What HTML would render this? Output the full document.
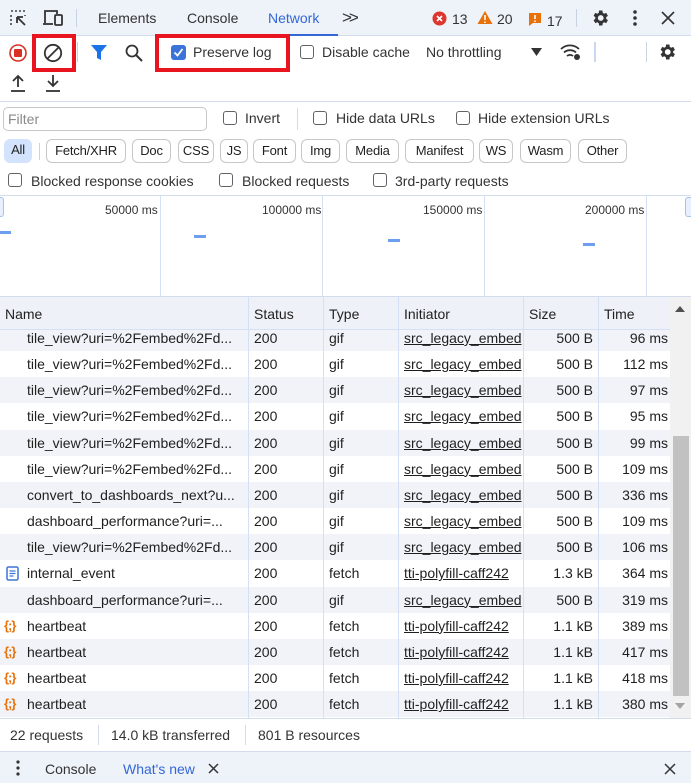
<!DOCTYPE html>
<html><head><meta charset="utf-8"><style>
*{box-sizing:border-box;margin:0;padding:0}
body{width:691px;height:783px;overflow:hidden;background:#fff;font-family:"Liberation Sans",sans-serif;font-size:14px;color:#1f1f1f;position:relative}
.a{position:absolute;white-space:nowrap}
.cb{position:absolute;width:14px;height:14px;border:1.5px solid #5f6368;border-radius:3px;background:#fff}
.chip{position:absolute;top:139px;height:24px;border:1px solid #c7c7c7;border-radius:6px;font-size:13px;line-height:22px;text-align:center;color:#1f1f1f;letter-spacing:-0.2px}
.row{position:absolute;left:0;width:670px;height:26.15px;font-size:14px;line-height:26px}
.row span{position:absolute;white-space:nowrap}
.g{background:#f1f3f8}
.vl{position:absolute;width:1px;background:#d3e0f5}
u{text-decoration:underline}
</style></head><body>
<div class="a" style="left:0;top:0;width:691px;height:36px;background:#eef2f9;border-bottom:1px solid #d3dcec"></div>
<svg class="a" style="left:9px;top:9px" width="20" height="20" viewBox="0 0 20 20"><path d="M2 2h2M6 2h2M10 2h2M14 2h2M2 6v2M2 10v2M2 14v2M16 6v1" stroke="#444" stroke-width="1.6"/><path d="M8 8l8 8M8 8h6M8 8v6" stroke="#333" stroke-width="1.8" fill="none"/></svg>
<svg class="a" style="left:42px;top:9px" width="22" height="18" viewBox="0 0 22 18"><path d="M3 14V2h12v3" stroke="#333" stroke-width="1.8" fill="none"/><path d="M1 15h10" stroke="#333" stroke-width="1.8"/><rect x="13" y="6" width="7" height="10" rx="1" stroke="#333" stroke-width="1.8" fill="none"/></svg>
<div class="a" style="left:76px;top:9px;width:1px;height:18px;background:#c8d2e2"></div>
<div class="a" style="left:98px;top:10px;color:#333">Elements</div>
<div class="a" style="left:187px;top:10px;color:#333">Console</div>
<div class="a" style="left:268px;top:10px;color:#3367d6">Network</div>
<div class="a" style="left:260px;top:34px;width:78px;height:2px;background:#3367d6"></div>
<div class="a" style="left:342px;top:8px;font-size:17px;color:#333;letter-spacing:-3px">&gt;&gt;</div>
<svg class="a" style="left:432px;top:11px" width="15" height="15"><circle cx="7.5" cy="7.5" r="7" fill="#dc362e"/><path d="M5 5l5 5M10 5l-5 5" stroke="#fff" stroke-width="1.6"/></svg>
<div class="a" style="left:452px;top:11px;color:#333">13</div>
<svg class="a" style="left:477px;top:10px" width="16" height="15"><path d="M8 1L15.5 14H.5z" fill="#e8710a"/><path d="M8 5v5M8 11.5v1.5" stroke="#fff" stroke-width="1.6"/></svg>
<div class="a" style="left:497px;top:11px;color:#333">20</div>
<svg class="a" style="left:528px;top:12px" width="14" height="15"><path d="M1 1h12v10H5l-4 3z" fill="#e8710a"/><path d="M7 3v4M7 8.5v1.5" stroke="#fff" stroke-width="1.6"/></svg>
<div class="a" style="left:547px;top:13px;color:#333">17</div>
<div class="a" style="left:576px;top:9px;width:1px;height:18px;background:#c8d2e2"></div>
<svg class="a" style="left:590px;top:8px" width="20" height="20" viewBox="0 0 24 24"><path fill="#333" d="M19.4 13a7.5 7.5 0 000-2l2.1-1.6-2-3.5-2.5 1a7 7 0 00-1.7-1L14.9 3h-4l-.4 2.9a7 7 0 00-1.7 1l-2.5-1-2 3.5L6.4 11a7.5 7.5 0 000 2l-2.1 1.6 2 3.5 2.5-1a7 7 0 001.7 1l.4 2.9h4l.4-2.9a7 7 0 001.7-1l2.5 1 2-3.5zM12.9 15.5a3.5 3.5 0 110-7 3.5 3.5 0 010 7z"/></svg>
<svg class="a" style="left:632px;top:9px" width="6" height="18"><circle cx="3" cy="3" r="1.8" fill="#333"/><circle cx="3" cy="9" r="1.8" fill="#333"/><circle cx="3" cy="15" r="1.8" fill="#333"/></svg>
<svg class="a" style="left:661px;top:11px" width="14" height="14"><path d="M1 1l12 12M13 1L1 13" stroke="#333" stroke-width="1.6"/></svg>

<svg class="a" style="left:9px;top:44px" width="18" height="18"><circle cx="9" cy="9" r="8" stroke="#d93025" stroke-width="1.6" fill="none"/><rect x="5" y="5" width="8" height="8" rx="1" fill="#d93025"/></svg>
<div class="a" style="left:32px;top:34px;width:44px;height:38px;border:4px solid #e8141f"></div>
<svg class="a" style="left:43px;top:43px" width="20" height="20"><circle cx="10" cy="10" r="8.2" stroke="#333" stroke-width="1.8" fill="none"/><path d="M4.5 15.5l11-11" stroke="#333" stroke-width="1.8"/></svg>
<div class="a" style="left:77px;top:42px;width:1px;height:20px;background:#c8d2e2"></div>
<svg class="a" style="left:91px;top:45px" width="16" height="16"><path d="M0 0h16l-6 7v8l-4-2V7z" fill="#1a73e8"/></svg>
<svg class="a" style="left:124px;top:43px" width="20" height="20"><circle cx="8" cy="8" r="5.5" stroke="#333" stroke-width="1.8" fill="none"/><path d="M12 12l6 6" stroke="#333" stroke-width="2"/></svg>
<div class="a" style="left:155px;top:34px;width:135px;height:38px;border:4px solid #e8141f"></div>
<div class="a" style="left:171px;top:45px;width:15px;height:15px;border-radius:3px;background:#3b73d9"></div>
<svg class="a" style="left:173px;top:47px" width="11" height="11"><path d="M1.5 5.5l3 3 5-6.5" stroke="#fff" stroke-width="1.8" fill="none"/></svg>
<div class="a" style="left:193px;top:44px;color:#333">Preserve log</div>
<div class="cb" style="left:300px;top:45px"></div>
<div class="a" style="left:322px;top:44px;color:#333">Disable cache</div>
<div class="a" style="left:426px;top:44px;color:#333">No throttling</div>
<svg class="a" style="left:531px;top:48px" width="11" height="8"><path d="M0 0h11L5.5 8z" fill="#333"/></svg>
<svg class="a" style="left:560px;top:43px" width="22" height="18"><path d="M1 6a13 13 0 0118 0M4 9.5a9 9 0 0112 0M7 13a4.5 4.5 0 016 0" stroke="#333" stroke-width="1.8" fill="none"/><circle cx="17" cy="14" r="3" fill="#333"/></svg>
<div class="a" style="left:594px;top:42px;width:2px;height:20px;background:#c8d8f0"></div>
<div class="a" style="left:646px;top:42px;width:1px;height:20px;background:#c8d2e2"></div>
<svg class="a" style="left:657px;top:42px" width="20" height="20" viewBox="0 0 24 24"><path fill="#333" d="M19.4 13a7.5 7.5 0 000-2l2.1-1.6-2-3.5-2.5 1a7 7 0 00-1.7-1L14.9 3h-4l-.4 2.9a7 7 0 00-1.7 1l-2.5-1-2 3.5L6.4 11a7.5 7.5 0 000 2l-2.1 1.6 2 3.5 2.5-1a7 7 0 001.7 1l.4 2.9h4l.4-2.9a7 7 0 001.7-1l2.5 1 2-3.5zM12.9 15.5a3.5 3.5 0 110-7 3.5 3.5 0 010 7z"/></svg>
<svg class="a" style="left:10px;top:74px" width="16" height="18"><path d="M8 13V2M3 7l5-5 5 5" stroke="#333" stroke-width="1.8" fill="none"/><path d="M1 17h14" stroke="#333" stroke-width="1.8"/></svg>
<svg class="a" style="left:45px;top:74px" width="16" height="18"><path d="M8 1v11M3 7l5 5 5-5" stroke="#333" stroke-width="1.8" fill="none"/><path d="M1 17h14" stroke="#333" stroke-width="1.8"/></svg>
<div class="a" style="left:0;top:101px;width:691px;height:1px;background:#d3dcec"></div>

<div class="a" style="left:3px;top:107px;width:204px;height:24px;border:1px solid #c7c7c7;border-radius:5px"></div>
<div class="a" style="left:8px;top:111px;color:#8a8a8a">Filter</div>
<div class="cb" style="left:223px;top:111px"></div>
<div class="a" style="left:245px;top:110px;color:#333">Invert</div>
<div class="a" style="left:297px;top:108px;width:1px;height:22px;background:#d3dcec"></div>
<div class="cb" style="left:313px;top:111px"></div>
<div class="a" style="left:336px;top:110px;color:#333">Hide data URLs</div>
<div class="cb" style="left:456px;top:111px"></div>
<div class="a" style="left:478px;top:110px;color:#333">Hide extension URLs</div>
<div class="chip" style="left:4px;width:28px;border:none;background:#d3e3fd">All</div>
<div class="a" style="left:39px;top:143px;width:1px;height:17px;background:#c8d2e2"></div>
<div class="chip" style="left:46px;width:80px">Fetch/XHR</div>
<div class="chip" style="left:132px;width:39px">Doc</div>
<div class="chip" style="left:178px;width:36px">CSS</div>
<div class="chip" style="left:220px;width:28px">JS</div>
<div class="chip" style="left:253px;width:43px">Font</div>
<div class="chip" style="left:301px;width:39px">Img</div>
<div class="chip" style="left:346px;width:53px">Media</div>
<div class="chip" style="left:405px;width:69px">Manifest</div>
<div class="chip" style="left:479px;width:34px">WS</div>
<div class="chip" style="left:520px;width:51px">Wasm</div>
<div class="chip" style="left:578px;width:49px">Other</div>
<div class="cb" style="left:8px;top:173px"></div>
<div class="a" style="left:31px;top:173px;color:#333">Blocked response cookies</div>
<div class="cb" style="left:219px;top:173px"></div>
<div class="a" style="left:242px;top:173px;color:#333">Blocked requests</div>
<div class="cb" style="left:373px;top:173px"></div>
<div class="a" style="left:395px;top:173px;color:#333">3rd-party requests</div>
<div class="a" style="left:0;top:195px;width:691px;height:1px;background:#d3dcec"></div>

<div class="a" style="left:-4px;top:197px;width:8px;height:20px;border:1px solid #a8c1ec;border-radius:3px;background:#e8f0fd"></div>
<div class="a" style="left:685px;top:197px;width:10px;height:20px;border:1px solid #a8c1ec;border-radius:3px;background:#e8f0fd"></div>
<div class="vl" style="left:160px;top:196px;height:100px"></div>
<div class="vl" style="left:322px;top:196px;height:100px"></div>
<div class="vl" style="left:484px;top:196px;height:100px"></div>
<div class="vl" style="left:646px;top:196px;height:100px"></div>
<div class="a" style="left:105px;top:203px;font-size:12px;color:#333">50000 ms</div>
<div class="a" style="left:262px;top:203px;font-size:12px;color:#333">100000 ms</div>
<div class="a" style="left:423px;top:203px;font-size:12px;color:#333">150000 ms</div>
<div class="a" style="left:585px;top:203px;font-size:12px;color:#333">200000 ms</div>
<div class="a" style="left:0;top:231px;width:11px;height:3px;background:#6e9ef0"></div>
<div class="a" style="left:194px;top:235px;width:12px;height:3px;background:#6e9ef0"></div>
<div class="a" style="left:388px;top:239px;width:12px;height:3px;background:#6e9ef0"></div>
<div class="a" style="left:583px;top:243px;width:12px;height:3px;background:#6e9ef0"></div>
<div class="a" style="left:0;top:296px;width:691px;height:1px;background:#d3dcec"></div>

<div class="row g" style="top:325px"><span style="left:27px">tile_view?uri=%2Fembed%2Fd...</span><span style="left:254px">200</span><span style="left:329px">gif</span><span style="left:404px"><u>src_legacy_embed</u></span><span style="right:77px">500 B</span><span style="right:2px">96 ms</span></div>
<div class="row" style="top:351.15px"><span style="left:27px">tile_view?uri=%2Fembed%2Fd...</span><span style="left:254px">200</span><span style="left:329px">gif</span><span style="left:404px"><u>src_legacy_embed</u></span><span style="right:77px">500 B</span><span style="right:2px">112 ms</span></div>
<div class="row g" style="top:377.3px"><span style="left:27px">tile_view?uri=%2Fembed%2Fd...</span><span style="left:254px">200</span><span style="left:329px">gif</span><span style="left:404px"><u>src_legacy_embed</u></span><span style="right:77px">500 B</span><span style="right:2px">97 ms</span></div>
<div class="row" style="top:403.45px"><span style="left:27px">tile_view?uri=%2Fembed%2Fd...</span><span style="left:254px">200</span><span style="left:329px">gif</span><span style="left:404px"><u>src_legacy_embed</u></span><span style="right:77px">500 B</span><span style="right:2px">95 ms</span></div>
<div class="row g" style="top:429.6px"><span style="left:27px">tile_view?uri=%2Fembed%2Fd...</span><span style="left:254px">200</span><span style="left:329px">gif</span><span style="left:404px"><u>src_legacy_embed</u></span><span style="right:77px">500 B</span><span style="right:2px">99 ms</span></div>
<div class="row" style="top:455.75px"><span style="left:27px">tile_view?uri=%2Fembed%2Fd...</span><span style="left:254px">200</span><span style="left:329px">gif</span><span style="left:404px"><u>src_legacy_embed</u></span><span style="right:77px">500 B</span><span style="right:2px">109 ms</span></div>
<div class="row g" style="top:481.9px"><span style="left:27px">convert_to_dashboards_next?u...</span><span style="left:254px">200</span><span style="left:329px">gif</span><span style="left:404px"><u>src_legacy_embed</u></span><span style="right:77px">500 B</span><span style="right:2px">336 ms</span></div>
<div class="row" style="top:508.05px"><span style="left:27px">dashboard_performance?uri=...</span><span style="left:254px">200</span><span style="left:329px">gif</span><span style="left:404px"><u>src_legacy_embed</u></span><span style="right:77px">500 B</span><span style="right:2px">109 ms</span></div>
<div class="row g" style="top:534.2px"><span style="left:27px">tile_view?uri=%2Fembed%2Fd...</span><span style="left:254px">200</span><span style="left:329px">gif</span><span style="left:404px"><u>src_legacy_embed</u></span><span style="right:77px">500 B</span><span style="right:2px">106 ms</span></div>
<div class="row" style="top:560.35px"><svg style="position:absolute;left:6px;top:6px" width="13" height="15"><rect x="1" y="1" width="11" height="13" rx="1.5" stroke="#3b73d9" stroke-width="1.5" fill="none"/><path d="M3.5 5h6M3.5 7.5h6M3.5 10h4" stroke="#3b73d9" stroke-width="1.3"/></svg><span style="left:27px">internal_event</span><span style="left:254px">200</span><span style="left:329px">fetch</span><span style="left:404px"><u>tti-polyfill-caff242</u></span><span style="right:77px">1.3 kB</span><span style="right:2px">364 ms</span></div>
<div class="row g" style="top:586.5px"><span style="left:27px">dashboard_performance?uri=...</span><span style="left:254px">200</span><span style="left:329px">gif</span><span style="left:404px"><u>src_legacy_embed</u></span><span style="right:77px">500 B</span><span style="right:2px">319 ms</span></div>
<div class="row" style="top:612.65px"><span style="left:4px;color:#e8710a;font-size:13px;font-weight:bold;letter-spacing:-1px">{;}</span><span style="left:27px">heartbeat</span><span style="left:254px">200</span><span style="left:329px">fetch</span><span style="left:404px"><u>tti-polyfill-caff242</u></span><span style="right:77px">1.1 kB</span><span style="right:2px">389 ms</span></div>
<div class="row g" style="top:638.8px"><span style="left:4px;color:#e8710a;font-size:13px;font-weight:bold;letter-spacing:-1px">{;}</span><span style="left:27px">heartbeat</span><span style="left:254px">200</span><span style="left:329px">fetch</span><span style="left:404px"><u>tti-polyfill-caff242</u></span><span style="right:77px">1.1 kB</span><span style="right:2px">417 ms</span></div>
<div class="row" style="top:664.95px"><span style="left:4px;color:#e8710a;font-size:13px;font-weight:bold;letter-spacing:-1px">{;}</span><span style="left:27px">heartbeat</span><span style="left:254px">200</span><span style="left:329px">fetch</span><span style="left:404px"><u>tti-polyfill-caff242</u></span><span style="right:77px">1.1 kB</span><span style="right:2px">418 ms</span></div>
<div class="row g" style="top:691.1px"><span style="left:4px;color:#e8710a;font-size:13px;font-weight:bold;letter-spacing:-1px">{;}</span><span style="left:27px">heartbeat</span><span style="left:254px">200</span><span style="left:329px">fetch</span><span style="left:404px"><u>tti-polyfill-caff242</u></span><span style="right:77px">1.1 kB</span><span style="right:2px">380 ms</span></div>

<div class="a" style="left:0;top:297px;width:670px;height:33px;background:#eef1f8;border-bottom:1px solid #d3e0f5"></div>
<div class="a" style="left:5px;top:306px">Name</div>
<div class="a" style="left:254px;top:306px">Status</div>
<div class="a" style="left:329px;top:306px">Type</div>
<div class="a" style="left:404px;top:306px">Initiator</div>
<div class="a" style="left:529px;top:306px">Size</div>
<div class="a" style="left:604px;top:306px">Time</div>
<div class="vl" style="left:248px;top:297px;height:421px"></div>
<div class="vl" style="left:323px;top:297px;height:421px"></div>
<div class="vl" style="left:398px;top:297px;height:421px"></div>
<div class="vl" style="left:523px;top:297px;height:421px"></div>
<div class="vl" style="left:598px;top:297px;height:421px"></div>

<div class="a" style="left:670px;top:297px;width:21px;height:421px;background:#f1f1f1"></div>
<svg class="a" style="left:675px;top:306px" width="10" height="6"><path d="M0 6L5 0l5 6z" fill="#505050"/></svg>
<div class="a" style="left:673px;top:436px;width:16px;height:260px;background:#c1c1c1"></div>
<svg class="a" style="left:675px;top:703px" width="10" height="6"><path d="M0 0l5 6 5-6z" fill="#a3a3a3"/></svg>
<div class="a" style="left:0;top:718px;width:691px;height:1px;background:#d3dcec"></div>

<div class="a" style="left:10px;top:727px;color:#333">22 requests</div>
<div class="a" style="left:98px;top:725px;width:1px;height:20px;background:#d3dcec"></div>
<div class="a" style="left:111px;top:727px;color:#333">14.0 kB transferred</div>
<div class="a" style="left:245px;top:725px;width:1px;height:20px;background:#d3dcec"></div>
<div class="a" style="left:258px;top:727px;color:#333">801 B resources</div>

<div class="a" style="left:0;top:751px;width:691px;height:32px;background:#eef2f9;border-top:1px solid #d3dcec"></div>
<svg class="a" style="left:15px;top:760px" width="6" height="16"><circle cx="3" cy="2" r="1.6" fill="#333"/><circle cx="3" cy="8" r="1.6" fill="#333"/><circle cx="3" cy="14" r="1.6" fill="#333"/></svg>
<div class="a" style="left:45px;top:761px;color:#333">Console</div>
<div class="a" style="left:123px;top:761px;color:#3367d6">What's new</div>
<svg class="a" style="left:208px;top:763px" width="11" height="11"><path d="M1 1l9 9M10 1l-9 9" stroke="#333" stroke-width="1.5"/></svg>
<svg class="a" style="left:664px;top:763px" width="12" height="12"><path d="M1 1l10 10M11 1L1 11" stroke="#333" stroke-width="1.5"/></svg>
</body></html>
